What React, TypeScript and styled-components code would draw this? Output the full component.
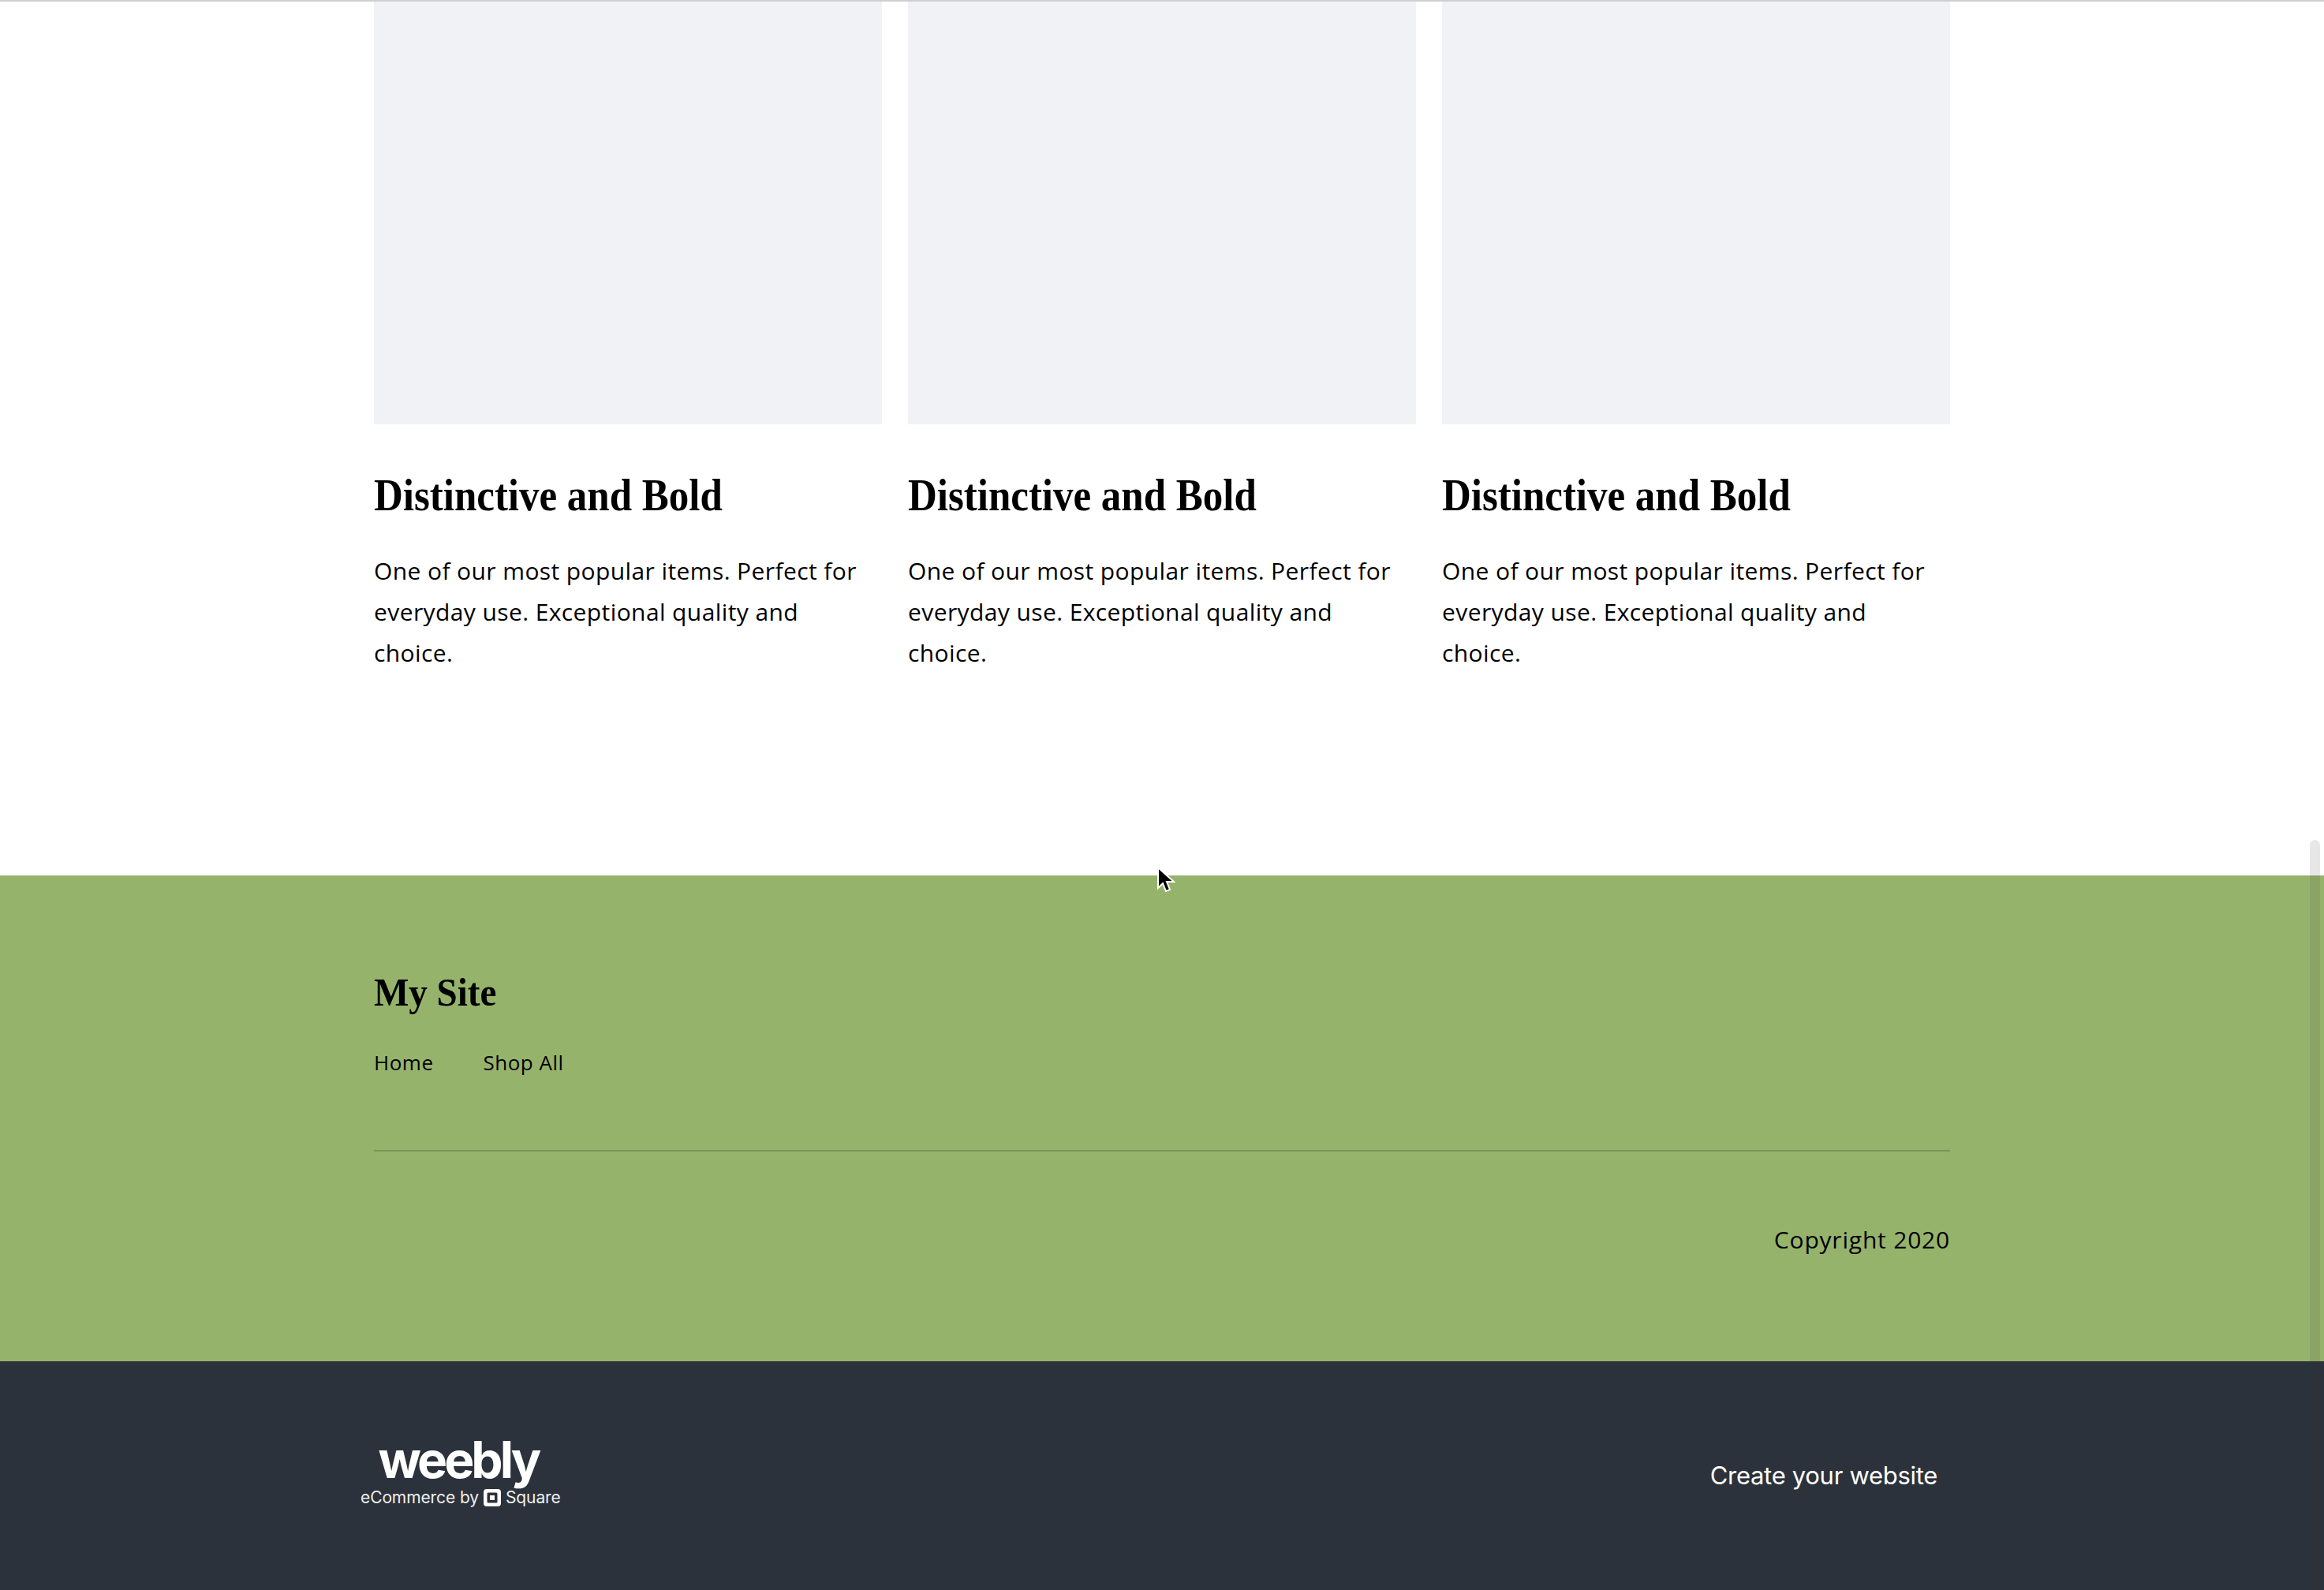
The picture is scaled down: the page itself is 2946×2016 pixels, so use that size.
import React from 'react';
import styled, { createGlobalStyle } from 'styled-components';

const GlobalStyle = createGlobalStyle`
  html, body {
    margin: 0;
    padding: 0;
    background: #ffffff;
  }
`;

const Page = styled.div`
  position: relative;
  width: 2946px;
  height: 2016px;
  overflow: hidden;
  border-top: 2px solid #cfcfcf;
  box-sizing: border-box;
  color: #000000;
`;

const Cards = styled.section`
  display: grid;
  grid-template-columns: repeat(3, 1fr);
  gap: 33px;
  width: 1998px;
  margin: 0 auto;
  padding-bottom: 256px;
`;

const Card = styled.article`
  display: flex;
  flex-direction: column;
`;

const Placeholder = styled.div`
  height: 536px;
  background: #f1f2f6;
`;

const CardTitle = styled.h2`
  margin: 60px 0 40px;
  font: 700 56px/60px "Liberation Serif", serif;
  transform: scaleX(0.91);
  transform-origin: left center;
  white-space: nowrap;
`;

const CardText = styled.p`
  margin: 0;
  max-width: 622px;
  font: 400 30px/52px "Open Sans", sans-serif;
  letter-spacing: 0.4px;
`;

const SiteFooter = styled.footer`
  background: #96b36c;
  padding: 118px 474px 134px;
`;

const SiteName = styled.h3`
  margin: 0 0 39px;
  font: 700 50px/60px "Liberation Serif", serif;
  transform: scaleX(0.94);
  transform-origin: left center;
`;

const FooterNav = styled.nav`
  display: flex;
  gap: 63px;
  font: 400 26px/40px "Open Sans", sans-serif;
  letter-spacing: 0.5px;
`;

const Rule = styled.hr`
  margin: 91px 0 92px;
  border: none;
  height: 2px;
  background: #7a9455;
`;

const Copyright = styled.div`
  text-align: right;
  font: 400 30px/40px "Open Sans", sans-serif;
  letter-spacing: 0.8px;
`;

const BrandBar = styled.div`
  display: flex;
  align-items: center;
  justify-content: space-between;
  height: 290px;
  padding: 0 490px 0 457px;
  background: #2c323b;
  color: #ffffff;
`;

const Brand = styled.div`
  display: flex;
  flex-direction: column;
  align-items: center;
  padding-bottom: 9px;
`;

const Wordmark = styled.div`
  margin: 0 6px 5px 0;
  font: 700 64px/60px Inter, sans-serif;
  letter-spacing: -4px;
`;

const Tagline = styled.div`
  display: flex;
  align-items: center;
  gap: 6px;
  font: 400 21px/26px Inter, sans-serif;
  letter-spacing: -0.1px;
  color: #eef0f2;
`;

const CreateLink = styled.a`
  font: 400 31px/40px Inter, sans-serif;
  letter-spacing: -0.3px;
  color: #ffffff;
  text-decoration: none;
`;

const ScrollThumb = styled.div`
  position: absolute;
  top: 1063px;
  right: 5px;
  width: 13px;
  height: 951px;
  border-radius: 7px 7px 0 0;
  background: rgba(60, 60, 60, 0.12);
`;

const Cursor = styled.svg`
  position: absolute;
  left: 1466px;
  top: 1096px;
  width: 24px;
  height: 36px;
`;

const items = [1, 2, 3];

const SquareMark = () => (
  <svg width="22" height="22" viewBox="0 0 22 22">
    <path
      fillRule="evenodd"
      fill="#ffffff"
      d="M4 0h14a4 4 0 0 1 4 4v14a4 4 0 0 1-4 4H4a4 4 0 0 1-4-4V4a4 4 0 0 1 4-4zM6 4.500a1.500 1.500 0 0 0-1.500 1.500v10a1.500 1.500 0 0 0 1.500 1.500h10a1.500 1.500 0 0 0 1.500-1.500V6a1.500 1.500 0 0 0-1.500-1.500zM8.500 8h5a.5.5 0 0 1 .5.5v5a.5.5 0 0 1-.5.5h-5a.5.5 0 0 1-.5-.5v-5a.5.5 0 0 1 .5-.5z"
    />
  </svg>
);

const App = () => {
  return (
    <Page>
      <GlobalStyle />
      <Cards>
        {items.map(item => (
          <Card key={item}>
            <Placeholder />
            <CardTitle>Distinctive and Bold</CardTitle>
            <CardText>One of our most popular items. Perfect for everyday use. Exceptional quality and choice.</CardText>
          </Card>
        ))}
      </Cards>
      <SiteFooter>
        <SiteName>My Site</SiteName>
        <FooterNav>
          <span>Home</span>
          <span>Shop All</span>
        </FooterNav>
        <Rule />
        <Copyright>Copyright 2020</Copyright>
      </SiteFooter>
      <BrandBar>
        <Brand>
          <Wordmark>weebly</Wordmark>
          <Tagline>
            <span>eCommerce by</span>
            <SquareMark />
            <span>Square</span>
          </Tagline>
        </Brand>
        <CreateLink href="#">Create your website</CreateLink>
      </BrandBar>
      <ScrollThumb />
      <Cursor viewBox="0 0 24 36">
        <path d="M2 2v26l6-6 4 10 5-2-4-10h9z" fill="#000000" stroke="#ffffff" strokeWidth="2" />
      </Cursor>
    </Page>
  );
};

export default App;
